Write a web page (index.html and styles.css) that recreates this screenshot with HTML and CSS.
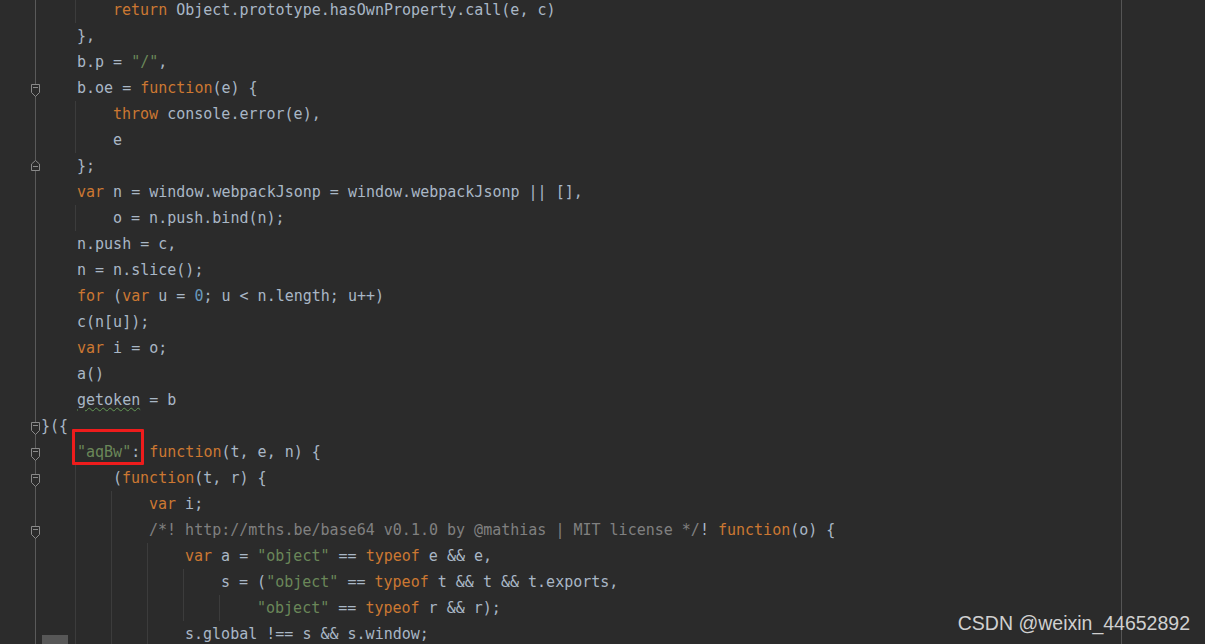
FILE: index.html
```html
<!DOCTYPE html>
<html>
<head>
<meta charset="utf-8">
<link rel="stylesheet" href="styles.css">
</head>
<body>
<div class="editor">
<div class="line"><div class="gut"></div><div class="code"><span class="ind g"></span><span class="ind"></span><span class="k">return</span> Object.prototype.hasOwnProperty.call(e, c)</div></div>
<div class="line"><div class="gut"></div><div class="code"><span class="ind"></span>},</div></div>
<div class="line"><div class="gut"></div><div class="code"><span class="ind"></span>b.p = <span class="s">"/"</span>,</div></div>
<div class="line"><div class="gut"><svg class="fold fs" viewBox="0 0 9 13" width="9" height="13"><path d="M0.5 0.5H8.5V8.5L4.5 12.5L0.5 8.5Z"/><path d="M2 3.5H7"/></svg></div><div class="code"><span class="ind"></span>b.oe = <span class="k">function</span>(e) {</div></div>
<div class="line"><div class="gut"></div><div class="code"><span class="ind g"></span><span class="ind"></span><span class="k">throw</span> console.error(e),</div></div>
<div class="line"><div class="gut"></div><div class="code"><span class="ind g"></span><span class="ind"></span>e</div></div>
<div class="line"><div class="gut"><svg class="fold fe" viewBox="0 0 9 11" width="9" height="11"><path d="M4.5 0.5L8.5 4V10.5H0.5V4Z"/><path d="M2 6.5H7"/></svg></div><div class="code"><span class="ind"></span>};</div></div>
<div class="line"><div class="gut"></div><div class="code"><span class="ind"></span><span class="k">var</span> n = window.webpackJsonp = window.webpackJsonp || [],</div></div>
<div class="line"><div class="gut"></div><div class="code"><span class="ind g"></span><span class="ind"></span>o = n.push.bind(n);</div></div>
<div class="line"><div class="gut"></div><div class="code"><span class="ind"></span>n.push = c,</div></div>
<div class="line"><div class="gut"></div><div class="code"><span class="ind"></span>n = n.slice();</div></div>
<div class="line"><div class="gut"></div><div class="code"><span class="ind"></span><span class="k">for</span> (<span class="k">var</span> u = <span class="n">0</span>; u &lt; n.length; u++)</div></div>
<div class="line"><div class="gut"></div><div class="code"><span class="ind"></span>c(n[u]);</div></div>
<div class="line"><div class="gut"></div><div class="code"><span class="ind"></span><span class="k">var</span> i = o;</div></div>
<div class="line"><div class="gut"></div><div class="code"><span class="ind"></span>a()</div></div>
<div class="line"><div class="gut"></div><div class="code"><span class="ind"></span><span class="typo">getoken</span> = b</div></div>
<div class="line"><div class="gut"><svg class="fold fs" viewBox="0 0 9 13" width="9" height="13"><path d="M0.5 0.5H8.5V8.5L4.5 12.5L0.5 8.5Z"/><path d="M2 3.5H7"/></svg></div><div class="code">}({</div></div>
<div class="line"><div class="gut"><svg class="fold fs" viewBox="0 0 9 13" width="9" height="13"><path d="M0.5 0.5H8.5V8.5L4.5 12.5L0.5 8.5Z"/><path d="M2 3.5H7"/></svg></div><div class="code"><span class="ind"></span><span class="mark"><span class="s">"aqBw"</span>:</span> <span class="k">function</span>(t, e, n) {</div></div>
<div class="line"><div class="gut"><svg class="fold fs" viewBox="0 0 9 13" width="9" height="13"><path d="M0.5 0.5H8.5V8.5L4.5 12.5L0.5 8.5Z"/><path d="M2 3.5H7"/></svg></div><div class="code"><span class="ind g"></span><span class="ind"></span>(<span class="k">function</span>(t, r) {</div></div>
<div class="line"><div class="gut"></div><div class="code"><span class="ind g"></span><span class="ind g"></span><span class="ind"></span><span class="k">var</span> i;</div></div>
<div class="line"><div class="gut"><svg class="fold fs" viewBox="0 0 9 13" width="9" height="13"><path d="M0.5 0.5H8.5V8.5L4.5 12.5L0.5 8.5Z"/><path d="M2 3.5H7"/></svg></div><div class="code"><span class="ind g"></span><span class="ind g"></span><span class="ind"></span><span class="c">/*! http://mths.be/base64 v0.1.0 by @mathias | MIT license */</span>! <span class="k">function</span>(o) {</div></div>
<div class="line"><div class="gut"></div><div class="code"><span class="ind g"></span><span class="ind g"></span><span class="ind g"></span><span class="ind"></span><span class="k">var</span> a = <span class="s">"object"</span> == <span class="k">typeof</span> e &amp;&amp; e,</div></div>
<div class="line"><div class="gut"></div><div class="code"><span class="ind g"></span><span class="ind g"></span><span class="ind g"></span><span class="ind g"></span><span class="ind"></span>s = (<span class="s">"object"</span> == <span class="k">typeof</span> t &amp;&amp; t &amp;&amp; t.exports,</div></div>
<div class="line"><div class="gut"></div><div class="code"><span class="ind g"></span><span class="ind g"></span><span class="ind g"></span><span class="ind g"></span><span class="ind g"></span><span class="ind"></span><span class="s">"object"</span> == <span class="k">typeof</span> r &amp;&amp; r);</div></div>
<div class="line"><div class="gut"></div><div class="code"><span class="ind g"></span><span class="ind g"></span><span class="ind g"></span><span class="ind"></span>s.global !== s &amp;&amp; s.window;</div></div>
</div>
<div class="margin-line"></div>
<div class="hscroll"></div>
<div class="watermark">CSDN @weixin_44652892</div>
</body>
</html>
```
FILE: styles.css
```css
html, body {
  margin: 0;
  padding: 0;
}
body {
  width: 1205px;
  height: 644px;
  overflow: hidden;
  background: #2b2b2b;
  position: relative;
}
.editor {
  margin-top: -3px;
  font-family: "DejaVu Sans Mono", monospace;
  font-size: 15px;
  color: #a9b7c6;
}
.line {
  display: flex;
  height: 26px;
}
.gut {
  flex: none;
  width: 35px;
  border-right: 1px solid #5a5a5a;
  background: #2c2c2c;
  position: relative;
}
.code {
  flex: 1;
  padding-left: 5px;
  white-space: pre;
  line-height: 26px;
}
.ind {
  display: inline-block;
  width: 36px;
  height: 26px;
  vertical-align: top;
}
.ind.g {
  background: linear-gradient(#3c3c3c, #3c3c3c) no-repeat 34px 0 / 1px 100%;
}
.k { color: #cc7832; }
.s { color: #6a8759; }
.n { color: #6897bb; }
.c { color: #808080; }
.typo {
  text-decoration: underline wavy #629755;
  text-decoration-thickness: 1px;
  text-underline-offset: 2px;
}
.mark {
  position: relative;
}
.mark::after {
  content: "";
  position: absolute;
  left: -5px;
  right: -4px;
  top: -14px;
  bottom: -4px;
  border: 3px solid #ee1c1c;
  border-radius: 1px;
}
.fold {
  position: absolute;
  left: 31px;
  fill: #2b2b2b;
  stroke: #8a8a8a;
  stroke-width: 1;
}
.fs { top: 9px; }
.fe { top: 7px; }
.margin-line {
  position: absolute;
  left: 1121px;
  top: 0;
  width: 1px;
  height: 644px;
  background: #555555;
}
.hscroll {
  position: absolute;
  left: 42px;
  top: 635px;
  width: 26px;
  height: 9px;
  background: #575757;
}
.watermark {
  position: absolute;
  right: 15px;
  top: 610px;
  font-family: "Liberation Sans", Arial, sans-serif;
  font-size: 19.5px;
  color: #d0d0d0;
  line-height: 26px;
}
```
